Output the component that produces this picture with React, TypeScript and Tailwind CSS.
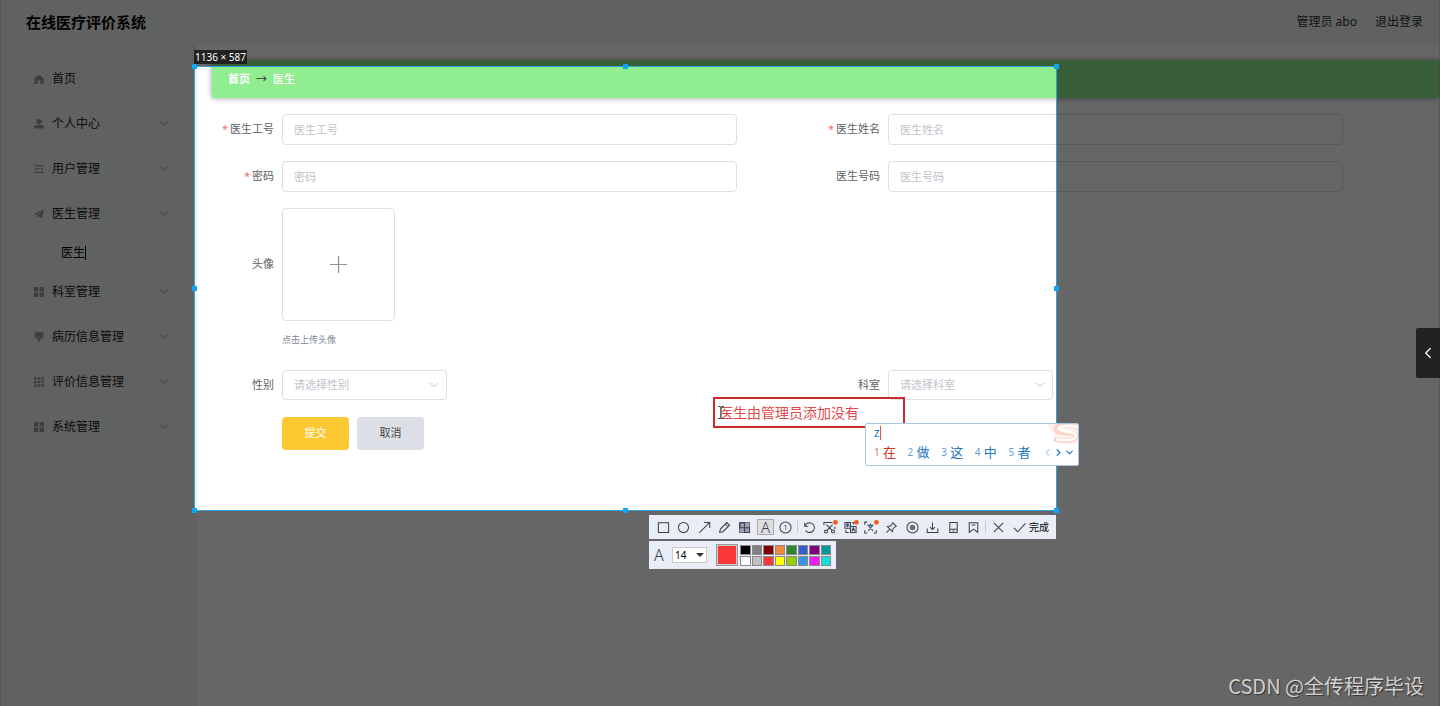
import type { ReactNode } from "react";
import { ChevronDown, ChevronLeft, ChevronRight } from "lucide-react";

type MenuItem = { label: string; icon: ReactNode; open?: string[]; leaf?: boolean };

const grid4 = <path d="M0 0h4.4v4.4H0zM5.6 0H10v4.4H5.6zM0 5.6h4.4V10H0zM5.6 5.6H10V10H5.6z" />;

const menu: MenuItem[] = [
  { label: "首页", leaf: true, icon: <path d="M5 .4 9.6 4.2V10H6.4V6.6H3.6V10H.4V4.2z" /> },
  { label: "个人中心", icon: <path d="M5 0a2.6 2.6 0 1 1 0 5.3A2.6 2.6 0 0 1 5 0zM2.4 6h5.2C9 6 10 7 10 8.2V9.6H0V8.2C0 7 1 6 2.4 6z" /> },
  { label: "用户管理", icon: <path d="M.3 1h9.4v1.3H.3zM.3 4.3h5.4v1.3H.3zM7 3.6l2.4 1.4L7 6.4zM.3 7.8h9.4v1.3H.3z" /> },
  { label: "医生管理", open: ["医生"], icon: <path d="M10 .3 8 9.2 5 7.6 3.6 9.8 3.4 6.8 8 2.6 2.6 6.3 0 5z" /> },
  { label: "科室管理", icon: grid4 },
  { label: "病历信息管理", icon: <path d="M.8.2h8.4v5.2H.8zM1 6.1h8L7.8 7.2H6v2.6H4V7.2H2.2z" /> },
  { label: "评价信息管理", icon: <path d="M0 .3h2.6v2.4H0zM3.7.3h2.6v2.4H3.7zM7.4.3H10v2.4H7.4zM0 3.8h2.6v2.4H0zM3.7 3.8h2.6v2.4H3.7zM7.4 3.8H10v2.4H7.4zM0 7.3h2.6v2.4H0zM3.7 7.3h2.6v2.4H3.7zM7.4 7.3H10v2.4H7.4z" /> },
  { label: "系统管理", icon: grid4 },
];

function Sidebar() {
  return (
    <aside className="w-[196px] shrink-0 bg-[#f2f2f2] px-[15px] pt-3">
      <nav className="bg-[#f0f4f2]">
        {menu.map((item) => (
          <div key={item.label}>
            <button type="button" className="flex h-[45px] w-full items-center pl-[18px] pr-3 text-xs text-[#1c1c1c]">
              <svg viewBox="0 0 10 10" className="mr-2 size-[10px] shrink-0 fill-[#a4999f]">
                {item.icon}
              </svg>
              <span className="flex-1 text-left">{item.label}</span>
              {!item.leaf && <ChevronDown size={13} strokeWidth={1.7} className="text-[#8a8a8a]" />}
            </button>
            {item.open?.map((sub) => (
              <a key={sub} href="#" className="flex h-[33px] items-center pl-[45px] text-xs text-black">
                <span className="border-r border-black leading-[14px]">{sub}</span>
              </a>
            ))}
          </div>
        ))}
      </nav>
    </aside>
  );
}

function Field({ id, label, required, children }: { id: string; label: string; required?: boolean; children: ReactNode }) {
  return (
    <div className="flex">
      <label htmlFor={id} className="flex h-[31px] w-[70px] shrink-0 items-center justify-end gap-[2px] pr-2 text-[11px] whitespace-nowrap text-[#606266]">
        {required && <span className="text-[#f56c6c]">*</span>}
        {label}
      </label>
      {children}
    </div>
  );
}

function TextField({ id, label, required, type = "text" }: { id: string; label: string; required?: boolean; type?: string }) {
  return (
    <Field id={id} label={label} required={required}>
      <input
        id={id}
        type={type}
        placeholder={label}
        className="h-[31px] w-3/4 min-w-0 rounded border border-[#dcdfe6] bg-white px-[11px] text-[11px] text-[#606266] placeholder:text-[#c0c4cc]"
      />
    </Field>
  );
}

function SelectField({ id, label, placeholder }: { id: string; label: string; placeholder: string }) {
  return (
    <Field id={id} label={label}>
      <div className="relative">
        <select
          id={id}
          className="h-[30px] w-[165px] appearance-none rounded border border-[#dcdfe6] bg-white px-[11px] text-[11px] text-[#c0c4cc]"
        >
          <option>{placeholder}</option>
        </select>
        <ChevronDown size={14} strokeWidth={1.7} className="pointer-events-none absolute top-2 right-[6px] text-[#c0c4cc]" />
      </div>
    </Field>
  );
}

function DoctorForm() {
  return (
    <form className="mt-4">
      <div className="grid grid-cols-2 gap-y-4">
        <TextField id="no" label="医生工号" required />
        <TextField id="name" label="医生姓名" required />
        <TextField id="pwd" label="密码" type="password" required />
        <TextField id="phone" label="医生号码" />
      </div>

      <div className="mt-4 flex">
        <label htmlFor="avatar" className="flex h-[113px] w-[70px] shrink-0 items-center justify-end pr-2 text-[11px] text-[#606266]">
          头像
        </label>
        <div>
          <label htmlFor="avatar" className="flex size-[113px] items-center justify-center rounded border border-[#dcdfe6]">
            <svg viewBox="0 0 17 17" className="size-[17px] stroke-[#8c939d]" strokeWidth="1.2">
              <path d="M8.5 0v17M0 8.5h17" />
            </svg>
          </label>
          <input id="avatar" type="file" className="sr-only" />
          <p className="text-[9px] leading-[38px] text-[#7d8792]">点击上传头像</p>
        </div>
      </div>

      <div className="mt-[11px] grid grid-cols-2">
        <SelectField id="gender" label="性别" placeholder="请选择性别" />
        <SelectField id="dept" label="科室" placeholder="请选择科室" />
      </div>

      <div className="mt-4 flex gap-2 pl-[70px] text-[11px]">
        <button type="button" className="h-[33px] w-[67px] rounded bg-[#fcc832] text-white">提交</button>
        <button type="button" className="h-[33px] w-[67px] rounded bg-[#dcdfe6] text-[#444]">取消</button>
      </div>
    </form>
  );
}

const hot = <circle cx="13.4" cy="1.4" r="2.6" fill="#f05a1a" stroke="none" />;

const shapeTools: [string, ReactNode][] = [
  ["矩形", <path d="M1.5 2h11v10.4h-11z" />],
  ["椭圆", <circle cx="7" cy="7" r="5.4" />],
  ["箭头", <path d="M1.5 12.5 12.4 1.8M6.6 1.6h6v6" />],
  ["画笔", <path d="M1.8 12.3l.8-3.6 7-7 2.8 2.8-7 7zM8 3.4l2.8 2.8" />],
  ["马赛克", <><path d="M1.8 2h10.6v10.4H1.8z" /><path d="M7.1 2h5.3v5.2H7.1zM1.8 7.2h5.3v5.2H1.8z" fill="#9aa2b4" stroke="none" /><path d="M7.1 7.2h5.3v5.2H7.1zM1.8 2h5.3v5.2H1.8z" fill="#4a5064" fillOpacity=".5" /></>],
  ["文字", <text x="7" y="12.6" textAnchor="middle" fontSize="16" fontWeight="300" fill="#3a3f52" stroke="none">A</text>],
  ["序号", <><circle cx="7" cy="7" r="6" /><text x="7" y="10" textAnchor="middle" fontSize="8" fill="#2f3447" stroke="none">1</text></>],
];

const actionTools: [string, ReactNode][] = [
  ["撤销", <path d="M1.8 1.8v3.8h3.8M2 5.4a5.3 5.3 0 1 1 .8 5" />],
  ["长截图", <><path d="M1 4.5v-3H10M12.8 6v3M3.8 4l6 6.2M10.4 4l-6 6.2" /><circle cx="3.2" cy="11.2" r="1.6" /><circle cx="10.8" cy="11.2" r="1.6" />{hot}</>],
  ["翻译", <><path d="M1 1.5h6v6.3H1zM7 6h6v6.5H7zM2.2 3.3h3.6M4 2.4v4.2M2.2 5.2h3.6M8.4 11l1.6-3.8 1.6 3.8M9 9.8h2M2 9.5v3h3M9 1.6h1.5V4" />{hot}</>],
  ["识别文字", <><path d="M.8 4V1.2h2.8M.8 10v2.8h2.8M13.2 10v2.8h-2.8M3.6 4.6h6.8M7 3v1.6M4.6 10.6 9.2 4.8M4.8 4.8l4.8 5.8" />{hot}</>],
  ["钉住", <path d="M8 1.4 12.6 6M8.6 2.2 6 5.4 2.6 6l5.4 5.4.8-3.4 3-2.6M5.2 8.8 1.6 12.6" />],
  ["录屏", <><circle cx="7" cy="7" r="6" /><circle cx="7" cy="7" r="3" fill="#6a6e7c" stroke="none" /></>],
  ["保存", <path d="M1.3 8v4.4h11.4V8M7 1.5v7.6M4.4 6.6 7 9.2l2.6-2.6" />],
  ["发送到手机", <path d="M3 1.6h8v10.8H3zM3 9h8M6 10.8h2" />],
  ["收藏", <path d="M2.4 1.8h9.2v10.6L7 8.8l-4.6 3.6zM5 4.2h4" />],
];

function Tool({ name, active, children }: { name: string; active?: boolean; children: ReactNode }) {
  return (
    <button
      type="button"
      aria-label={name}
      className={active ? "mx-[2px] flex h-4 items-center justify-center border border-[#aaa] bg-[#dedede]" : "flex h-4 items-center justify-center"}
    >
      <svg viewBox="0 0 14 14" className="size-[13px] shrink-0 overflow-visible" fill="none" stroke="#3a3f52" strokeWidth="1.1">
        {children}
      </svg>
    </button>
  );
}

function Toolbar() {
  return (
    <div className="flex h-6 w-[407px] items-center bg-[#e8edf6] pl-1">
      <div className="grid w-[143px] grid-cols-7">
        {shapeTools.map(([name, icon]) => (
          <Tool key={name} name={name} active={name === "文字"}>{icon}</Tool>
        ))}
      </div>
      <div className="mx-px h-3 w-px bg-[#c4c8d0]" />
      <div className="grid w-[185px] grid-cols-9">
        {actionTools.map(([name, icon]) => (
          <Tool key={name} name={name}>{icon}</Tool>
        ))}
      </div>
      <div className="mx-px h-3 w-px bg-[#c4c8d0]" />
      <div className="ml-[5px] flex items-center gap-2">
        <Tool name="关闭"><path d="M2 2l10 10M12 2 2 12" /></Tool>
        <button type="button" className="flex items-center gap-[3px] text-[10px] leading-4 whitespace-nowrap text-black">
          <svg viewBox="0 0 14 14" className="size-[13px]" fill="none" stroke="#3a3f52" strokeWidth="1.1">
            <path d="M1 7.4 5 11.6 13.4 2.6" />
          </svg>
          完成
        </button>
      </div>
    </div>
  );
}

const swatches = [
  "#000000", "#808080", "#800000", "#f7883a", "#308430", "#385ad3", "#800080", "#009999",
  "#ffffff", "#c0c0c0", "#fb3838", "#ffff00", "#99cc00", "#3894e4", "#f31bf3", "#16dcdc",
];

function StyleBar() {
  return (
    <div className="mt-[2px] flex h-7 w-[187px] items-center bg-[#e8edf6] pl-[5px]">
      <span className="w-[18px] text-base leading-none font-light text-[#3a3f52]">A</span>
      <div className="relative">
        <select aria-label="字号" className="block h-4 w-[35px] appearance-none border border-[#ccc] bg-white pl-[2px] text-[10px] leading-[14px] text-black">
          <option>14</option>
        </select>
        <svg viewBox="0 0 8 4" className="pointer-events-none absolute top-[6px] right-[3px] h-1 w-2 fill-[#333]">
          <path d="M0 0h8L4 4z" />
        </svg>
      </div>
      <button type="button" aria-label="当前颜色" className="ml-[9px] h-[22px] w-[22px] border border-[#999] bg-[#fb3838] ring-1 ring-[#ccc] ring-inset" />
      <div className="ml-[2px] grid w-[91px] grid-cols-8 gap-px">
        {swatches.map((c) => (
          <button key={c} type="button" aria-label={c} className="h-[10px] border border-[#8a8a8a]" style={{ backgroundColor: c }} />
        ))}
      </div>
    </div>
  );
}

function ImePanel() {
  return (
    <div className="absolute top-[356px] left-[670px] h-[43px] w-[214px] overflow-hidden rounded-xs border border-[#a9c6e4] bg-white px-2 text-[#1c78bf]">
      <svg viewBox="0 0 30 22" className="absolute top-0 right-0 h-[22px] w-[30px]" fill="none">
        <path d="M0 0h30v19C20 22 6 16 0 0z" fill="#fef2ee" />
        <path d="M32 4C22-1 6 1 8 6s20 1 20 6-12 6-22 3" stroke="#fbd5c9" strokeWidth="5" />
        <path d="M32 4C22 0 9 2 11 5s18 2 17 7-12 5-20 3" stroke="#fff" strokeWidth="2.5" />
      </svg>
      <div className="flex h-[18px] items-center">
        <span className="border-r border-[#e05a3a] text-xs leading-[14px]">z</span>
      </div>
      <div className="flex items-center">
        <ol className="grid w-[168px] shrink-0 grid-cols-5">
          {["在", "做", "这", "中", "者"].map((word, i) => (
            <li key={word} className={i === 0 ? "flex items-center gap-[3px] text-[#c7371f]" : "flex items-center gap-[3px]"}>
              <span className="w-[6px] text-[10px] leading-5 opacity-70">{i + 1}</span>
              <span className="text-[13px] leading-5">{word}</span>
            </li>
          ))}
        </ol>
        <ChevronLeft size={11} strokeWidth={2.5} className="shrink-0 opacity-30" />
        <ChevronRight size={11} strokeWidth={2.5} className="shrink-0" />
        <ChevronDown size={11} strokeWidth={2.5} className="shrink-0" />
      </div>
    </div>
  );
}

const handles = [
  "-top-[3px] -left-[3px]",
  "-top-[3px] left-1/2 -ml-[3px]",
  "-top-[3px] -right-[3px]",
  "top-1/2 -left-[3px] -mt-[3px]",
  "top-1/2 -right-[3px] -mt-[3px]",
  "-bottom-[3px] -left-[3px]",
  "-bottom-[3px] left-1/2 -ml-[3px]",
  "-bottom-[3px] -right-[3px]",
];

function CaptureOverlay() {
  return (
    <div className="absolute top-[66px] left-[194px] h-[445px] w-[863px] border border-[#2aa5dc] shadow-[0_0_0_2000px_rgba(0,0,0,0.6)]">
      {handles.map((pos) => (
        <i key={pos} className={`absolute size-[5px] bg-[#0ea5f5] ${pos}`} />
      ))}
      <div className="absolute -top-[17px] -left-px bg-[#222] px-px text-[10px] leading-[14px] whitespace-nowrap text-white">1136 × 587</div>

      <div className="absolute top-[330px] left-[518px] flex h-[31px] w-[192px] items-center border-2 border-[#c92a2a] pl-1 text-sm whitespace-nowrap text-[#e0484a]">
        医生由管理员添加没有
        <svg viewBox="0 0 6 13" className="absolute top-[7px] left-[3px] h-[13px] w-[6px]" fill="none" stroke="#1d5a50">
          <path d="M0 .5h2.2L3 1.3l.8-.8H6M3 1v11M0 12.5h2.2l.8-.8.8.8H6" />
        </svg>
      </div>
      <ImePanel />

      <div className="absolute top-[448px] left-[454px]">
        <Toolbar />
        <StyleBar />
      </div>
    </div>
  );
}

export default function App() {
  return (
    <div className="relative flex min-h-screen flex-col overflow-hidden bg-white font-['Noto_Sans','Noto_Sans_CJK_SC',sans-serif]">
      <header className="flex h-11 items-center border-x border-[#dcdcdc] bg-[#f0f6f4] pr-4 pl-[25px]">
        <h1 className="flex-1 text-[15px] font-bold text-black">在线医疗评价系统</h1>
        <span className="mr-[18px] text-xs text-[#333]">管理员 abo</span>
        <a href="#" className="text-xs text-[#333]">退出登录</a>
      </header>

      <div className="flex flex-1 border-x border-[#dcdcdc]">
        <Sidebar />
        <main className="min-w-0 flex-1 px-[15px] pt-4">
          <div className="-mr-[15px] flex h-[38px] items-center gap-[6px] bg-[#90ee90] pl-4 text-[11px] font-bold text-white shadow-[0_0_6px_rgba(0,0,0,0.4)]">
            <a href="#">首页</a>
            <span className="font-normal text-[#333]">→</span>
            <a href="#" className="font-medium">医生</a>
          </div>
          <DoctorForm />
        </main>
      </div>

      <CaptureOverlay />

      <button type="button" aria-label="展开" className="absolute top-[328px] right-0 flex h-[50px] w-6 items-center justify-center rounded-l-xs bg-[#222] text-white">
        <ChevronLeft size={18} strokeWidth={1.6} />
      </button>
      <div className="absolute right-4 bottom-[6px] font-['Noto_Sans_CJK_SC',sans-serif] text-xl leading-7 text-[#d0d0d0] [text-shadow:1px_1px_1px_#333]">
        CSDN @全传程序毕设
      </div>
    </div>
  );
}
